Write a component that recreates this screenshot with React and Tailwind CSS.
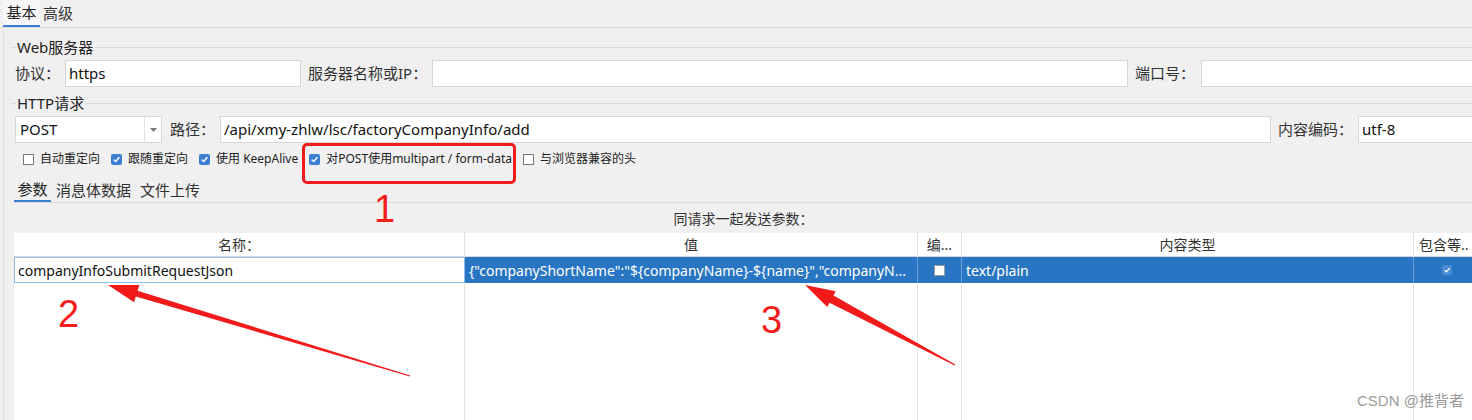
import React from "react";

const FONT = { fontFamily: '"Noto Sans", "Noto Sans CJK SC", sans-serif' };

function Check({ checked }) {
  if (checked) {
    return (
      <span className="inline-flex items-center justify-center w-[11px] h-[11px] rounded-[2px] bg-[#3c7fd2] shrink-0">
        <svg width="9" height="9" viewBox="0 0 10 10">
          <path d="M2 5.2 L4.2 7.3 L8.2 2.6" stroke="white" strokeWidth="1.6" fill="none" />
        </svg>
      </span>
    );
  }
  return <span className="inline-block w-[11px] h-[11px] border border-[#7a7a7a] bg-white shrink-0" />;
}

function CheckItem({ checked, label }) {
  return (
    <div className="flex items-center gap-[6px] text-[12px] text-[#222]">
      <Check checked={checked} />
      <span>{label}</span>
    </div>
  );
}

function Titled({ label }) {
  return (
    <div className="flex items-center h-[20px] -ml-[5px]">
      <div className="w-[6px] h-px bg-[#dcdcdc]" />
      <span className="text-[15px] text-[#222] px-[1px]">{label}</span>
      <div className="flex-1 h-px bg-[#dcdcdc] ml-[1px]" />
    </div>
  );
}

function Input({ value, className }) {
  return (
    <div className={"h-[27px] bg-white border border-[#d6d6d6] flex items-center pl-[3px] text-[15px] text-[#111] " + (className || "")}>
      {value}
    </div>
  );
}

export default function App() {
  return (
    <div className="relative w-[1472px] h-[420px] bg-[#f0f0f0] overflow-hidden flex flex-col" style={FONT}>
      {/* Top tabs */}
      <div className="h-[28px] flex items-stretch border-b border-[#dcdcdc] shrink-0">
        <div className="ml-[3px] w-[37px] flex items-center justify-center text-[15px] text-[#222] bg-[#f7f7f7] border-b-2 border-[#3c7fd2]">基本</div>
        <div className="w-[36px] flex items-center justify-center text-[15px] text-[#333]">高级</div>
      </div>

      {/* Content */}
      <div className="flex-1 ml-[3px] border-l border-[#dcdcdc] pl-[11px] flex flex-col min-h-0">
        <div className="mt-[9px]"><Titled label="Web服务器" /></div>
        <div className="mt-[3px] flex items-center">
          <span className="w-[50px] text-[15px] text-[#333]">协议：</span>
          <Input value="https" className="w-[236px]" />
          <span className="ml-[7px] w-[124px] text-[15px] text-[#333]">服务器名称或IP：</span>
          <Input value="" className="w-[696px]" />
          <span className="ml-[7px] w-[66px] text-[15px] text-[#333]">端口号：</span>
          <Input value="" className="flex-1 -mr-[4px]" />
        </div>

        <div className="mt-[6px]"><Titled label="HTTP请求" /></div>
        <div className="mt-[3px] flex items-center">
          <div className="w-[147px] h-[27px] bg-white border border-[#d6d6d6] flex items-center">
            <span className="flex-1 pl-[4px] text-[15px] text-[#111]">POST</span>
            <div className="w-[17px] h-full border-l border-[#e0e0e0] flex items-center justify-center">
              <svg width="7" height="4" viewBox="0 0 7 4"><path d="M0 0 L7 0 L3.5 4 Z" fill="#777" /></svg>
            </div>
          </div>
          <span className="ml-[8px] w-[50px] text-[15px] text-[#333]">路径：</span>
          <Input value="/api/xmy-zhlw/lsc/factoryCompanyInfo/add" className="w-[1051px]" />
          <span className="ml-[7px] w-[80px] text-[15px] text-[#333]">内容编码：</span>
          <Input value="utf-8" className="flex-1 -mr-[4px]" />
        </div>

        <div className="mt-[5px] h-[22px] flex items-center gap-[11px] pl-[8px]">
          <CheckItem checked={false} label="自动重定向" />
          <CheckItem checked label="跟随重定向" />
          <CheckItem checked label="使用 KeepAlive" />
          <CheckItem checked label="对POST使用multipart / form-data" />
          <CheckItem checked={false} label="与浏览器兼容的头" />
        </div>

        {/* Sub tabs */}
        <div className="mt-[8px] h-[25px] flex items-stretch border-b border-[#dcdcdc] -ml-[1px] shrink-0">
          <div className="w-[37px] flex items-center justify-center text-[15px] text-[#222] border-b-2 border-[#3c7fd2]">参数</div>
          <div className="ml-[5px] flex items-center text-[15px] text-[#333]">消息体数据</div>
          <div className="ml-[9px] flex items-center text-[15px] text-[#333]">文件上传</div>
        </div>

        <div className="h-[30px] flex items-center justify-center text-[14px] text-[#333] shrink-0">同请求一起发送参数：</div>

        {/* Table */}
        <div className="-ml-[1px] flex-1 flex flex-col bg-white min-h-0">
          <div className="h-[24px] grid grid-cols-[451px_453px_44px_452px_1fr] border-b border-[#d8d8d8] text-[14px] text-[#333] shrink-0">
            <div className="flex items-center justify-center border-r border-[#e2e2e2]">名称：</div>
            <div className="flex items-center justify-center border-r border-[#e2e2e2]">值</div>
            <div className="flex items-center justify-center border-r border-[#e2e2e2]">编...</div>
            <div className="flex items-center justify-center border-r border-[#e2e2e2]">内容类型</div>
            <div className="flex items-center pl-[5px] whitespace-nowrap overflow-hidden">包含等..</div>
          </div>
          <div className="h-[26px] grid grid-cols-[451px_453px_44px_452px_1fr] text-[14px] shrink-0">
            <div className="flex items-center pl-[3px] border border-[#8fbdec] bg-white text-[#111]">companyInfoSubmitRequestJson</div>
            <div className="flex items-center pl-[4px] bg-[#2876c3] text-white border-r border-[#6a9fd6] whitespace-nowrap overflow-hidden">{'{"companyShortName":"${companyName}-${name}","companyN...'}</div>
            <div className="flex items-center justify-center bg-[#2876c3] border-r border-[#6a9fd6]">
              <span className="inline-block w-[11px] h-[11px] bg-white border border-[#9a9a9a]" />
            </div>
            <div className="flex items-center pl-[4px] bg-[#2876c3] text-white border-r border-[#6a9fd6]">text/plain</div>
            <div className="flex items-center bg-[#2876c3] pl-[28px]">
              <span className="inline-flex items-center justify-center w-[10px] h-[10px] rounded-[2px] bg-[#4a8cd6]">
                <svg width="8" height="8" viewBox="0 0 10 10"><path d="M2 5.2 L4.2 7.3 L8.2 2.6" stroke="white" strokeWidth="1.6" fill="none" /></svg>
              </span>
            </div>
          </div>
          <div className="flex-1 grid grid-cols-[451px_453px_44px_452px_1fr]">
            <div className="border-r border-[#e6e6e6]" />
            <div className="border-r border-[#e6e6e6]" />
            <div className="border-r border-[#e6e6e6]" />
            <div className="border-r border-[#e6e6e6]" />
            <div />
          </div>
        </div>
      </div>

      {/* Annotations overlay */}
      <div className="absolute left-[302px] top-[143px] w-[214px] h-[41px] border-[3px] border-[#f01c1c] rounded-[5px] pointer-events-none" />
      <svg className="absolute inset-0 pointer-events-none" width="1472" height="420" viewBox="0 0 1472 420">
        <polygon points="108,285 139.3,285 137.6,290.7 410.2,375.6 409.8,376.4 135.8,296.5 134.1,302.2" fill="#f21a1a" />
        <polygon points="805,285 835.7,291.2 833.5,295.5 955.3,364.6 954.7,365.4 829.5,302.8 827.2,307.0" fill="#f21a1a" />
      </svg>
      <div className="absolute left-[374px] top-[190px] text-[38px] leading-none text-[#f51c1c]" style={{ fontFamily: '"Liberation Sans", sans-serif' }}>1</div>
      <div className="absolute left-[58px] top-[295px] text-[38px] leading-none text-[#f51c1c]" style={{ fontFamily: '"Liberation Sans", sans-serif' }}>2</div>
      <div className="absolute left-[761px] top-[301px] text-[38px] leading-none text-[#f51c1c]" style={{ fontFamily: '"Liberation Sans", sans-serif' }}>3</div>
      <div className="absolute left-[1357px] top-[393px] text-[15px] text-[#9a9a9a] leading-none" style={{ fontFamily: '"Liberation Sans", "Noto Sans CJK SC", sans-serif' }}>CSDN @推背者</div>
    </div>
  );
}
